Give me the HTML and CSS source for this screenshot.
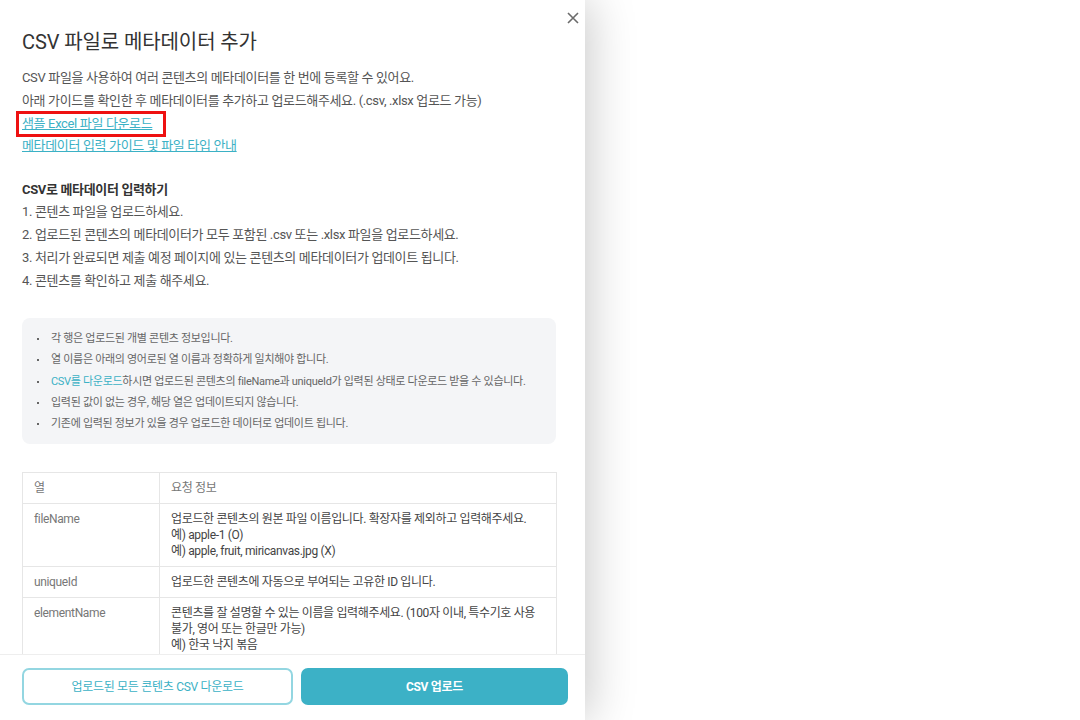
FILE: index.html
```html
<!DOCTYPE html>
<html lang="ko">
<head>
<meta charset="utf-8">
<title>CSV 파일로 메타데이터 추가</title>
<link rel="stylesheet" href="styles.css">
</head>
<body>
<div class="modal">
  <button class="close" aria-label="닫기">
    <svg width="12" height="12" viewBox="0 0 12 12"><path d="M1 1L11 11M11 1L1 11" stroke="#6b6b6b" stroke-width="1.6" fill="none"/></svg>
  </button>
  <div class="body">
    <h1 class="title">CSV 파일로 메타데이터 추가</h1>
    <p class="desc">CSV 파일을 사용하여 여러 콘텐츠의 메타데이터를 한 번에 등록할 수 있어요.<br>아래 가이드를 확인한 후 메타데이터를 추가하고 업로드해주세요. (.csv, .xlsx 업로드 가능)</p>
    <div class="links">
      <a class="link marked" href="#">샘플 Excel 파일 다운로드</a>
      <a class="link" href="#">메타데이터 입력 가이드 및 파일 타입 안내</a>
    </div>
    <div class="steps">
      <h2 class="steps-title">CSV로 메타데이터 입력하기</h2>
      <ol class="step-list">
        <li>1. 콘텐츠 파일을 업로드하세요.</li>
        <li>2. 업로드된 콘텐츠의 메타데이터가 모두 포함된 .csv 또는 .xlsx 파일을 업로드하세요.</li>
        <li>3. 처리가 완료되면 제출 예정 페이지에 있는 콘텐츠의 메타데이터가 업데이트 됩니다.</li>
        <li>4. 콘텐츠를 확인하고 제출 해주세요.</li>
      </ol>
    </div>
    <ul class="notice">
      <li>각 행은 업로드된 개별 콘텐츠 정보입니다.</li>
      <li>열 이름은 아래의 영어로된 열 이름과 정확하게 일치해야 합니다.</li>
      <li><span class="accent">CSV를 다운로드</span>하시면 업로드된 콘텐츠의 fileName과 uniqueId가 입력된 상태로 다운로드 받을 수 있습니다.</li>
      <li>입력된 값이 없는 경우, 해당 열은 업데이트되지 않습니다.</li>
      <li>기존에 입력된 정보가 있을 경우 업로드한 데이터로 업데이트 됩니다.</li>
    </ul>
    <table class="spec">
      <thead>
        <tr><th class="col-key">열</th><th>요청 정보</th></tr>
      </thead>
      <tbody>
        <tr><td class="col-key">fileName</td><td>업로드한 콘텐츠의 원본 파일 이름입니다. 확장자를 제외하고 입력해주세요.<br>예) apple-1 (O)<br>예) apple, fruit, miricanvas.jpg (X)</td></tr>
        <tr><td class="col-key">uniqueId</td><td>업로드한 콘텐츠에 자동으로 부여되는 고유한 ID 입니다.</td></tr>
        <tr><td class="col-key">elementName</td><td>콘텐츠를 잘 설명할 수 있는 이름을 입력해주세요. (100자 이내, 특수기호 사용 불가, 영어 또는 한글만 가능)<br>예) 한국 낙지 볶음</td></tr>
      </tbody>
    </table>
  </div>
  <div class="footer">
    <button class="btn btn-outline">업로드된 모든 콘텐츠 CSV 다운로드</button>
    <button class="btn btn-fill">CSV 업로드</button>
  </div>
</div>
</body>
</html>
```

FILE: styles.css
```css
html, body {
  margin: 0;
  padding: 0;
  background: #ffffff;
  width: 1080px;
  height: 720px;
  overflow: hidden;
  font-family: Roboto, "Noto Sans CJK KR", sans-serif;
}

.modal {
  position: relative;
  width: 585px;
  height: 720px;
  background: #ffffff;
  box-shadow: 4px 0 44px rgba(0, 0, 0, 0.22);
  display: flex;
  flex-direction: column;
}

.close {
  position: absolute;
  top: 11px;
  left: 566px;
  width: 13px;
  height: 13px;
  padding: 0;
  border: 0;
  background: none;
  display: flex;
  align-items: center;
  justify-content: center;
}

.body {
  flex: 1;
  overflow: hidden;
  padding: 28px 29px 0 22px;
  letter-spacing: -0.35px;
}

.title {
  margin: 0;
  font-size: 20px;
  line-height: 28px;
  font-weight: 400;
  color: #333333;
  letter-spacing: -0.1px;
}

.desc {
  margin: 11px 0 0;
  font-size: 13px;
  line-height: 22.8px;
  color: #555555;
}

.links {
  display: flex;
  flex-direction: column;
  align-items: flex-start;
}

.link {
  font-size: 13px;
  line-height: 22.5px;
  color: #3bb1c5;
  text-decoration: underline;
}

.marked {
  line-height: 18px;
  margin: 1px 0 1.5px -3px;
  padding: 1px 11px 1px 3px;
  outline: 3px solid #ee1111;
}

.steps {
  margin-top: 21px;
}

.steps-title {
  margin: 0;
  font-size: 13px;
  line-height: 22.8px;
  font-weight: 700;
  color: #333333;
}

.step-list {
  margin: 0;
  padding: 0;
  list-style: none;
  font-size: 13px;
  line-height: 22.7px;
  color: #555555;
}

.notice {
  margin: 26px 0 0;
  padding: 10px 8px 10px 29px;
  background: #f4f5f7;
  border-radius: 8px;
  list-style: none;
  font-size: 11px;
  line-height: 21.2px;
  color: #666666;
  letter-spacing: -0.3px;
}

.notice li {
  position: relative;
  white-space: nowrap;
}

.notice li::before {
  content: "";
  position: absolute;
  left: -14px;
  top: 10px;
  width: 2px;
  height: 2px;
  background: #666666;
}

.accent {
  color: #3bb1c5;
}

.spec {
  margin-top: 28px;
  width: 535px;
  border-collapse: collapse;
  font-size: 12px;
  line-height: 16px;
}

.spec th,
.spec td {
  border: 1px solid #e6e6e6;
  text-align: left;
  vertical-align: top;
  padding: 7px 11px 7px 11px;
  font-weight: 400;
  color: #444444;
}

.spec th {
  color: #777777;
}

.spec .col-key {
  width: 114px;
  color: #777777;
}

.footer {
  flex: none;
  border-top: 1px solid #eeeeee;
  padding: 13px 17px 15px 22px;
  display: flex;
  gap: 8px;
  background: #ffffff;
}

.btn {
  flex: 1 1 0;
  min-width: 0;
  box-sizing: border-box;
  height: 37px;
  padding: 0 8px;
  border-radius: 7px;
  display: flex;
  align-items: center;
  justify-content: center;
  font-family: Roboto, "Noto Sans CJK KR", sans-serif;
  font-size: 12px;
  line-height: 16px;
  letter-spacing: -0.3px;
  white-space: nowrap;
}

.btn-outline {
  background: #ffffff;
  border: 2px solid #93d6e1;
  color: #3bb1c5;
}

.btn-fill {
  background: #3cb1c6;
  border: 0;
  color: #ffffff;
  font-weight: 700;
}
```
